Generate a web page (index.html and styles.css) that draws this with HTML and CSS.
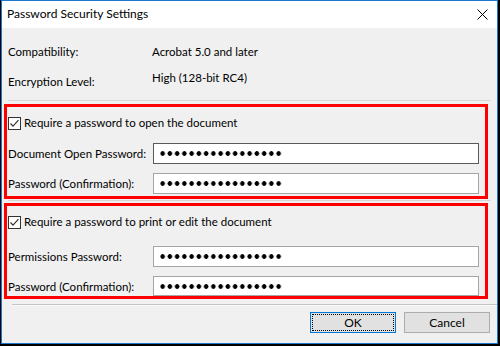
FILE: index.html
```html
<!DOCTYPE html>
<html lang="en">
<head>
    <meta charset="UTF-8">
    <title>Password Security Settings</title>
    <link rel="stylesheet" href="styles.css">
</head>
<body>
<div class="window">
    <div class="titlebar">
        <span class="title">Password Security Settings</span>
        <svg class="close" width="11" height="11" viewBox="0 0 11 11">
            <path d="M0.5 0.5L10.5 10.5M10.5 0.5L0.5 10.5" stroke="#000" stroke-width="1" fill="none"/>
        </svg>
    </div>
    <div class="content">
        <div class="info-row">
            <span class="info-label">Compatibility:</span>
            <span class="info-value">Acrobat 5.0 and later</span>
        </div>
        <div class="info-row level">
            <span class="info-label">Encryption Level:</span>
            <span class="info-value">High (128-bit RC4)</span>
        </div>
        <div class="rule"></div>
        <div class="group">
            <div class="check-row">
                <svg class="checkbox" width="13" height="13" viewBox="0 0 13 13">
                    <rect x="0.5" y="0.5" width="12" height="12" fill="#fff" stroke="#333"/>
                    <path d="M2.5 6.5L5 9.2L10.5 3.2" stroke="#333" stroke-width="1.2" fill="none"/>
                </svg>
                <span>Require a password to open the document</span>
            </div>
            <div class="field-row">
                <span class="field-label">Document Open Password:</span>
                <span class="field focused"><span class="dots"></span></span>
            </div>
            <div class="field-row">
                <span class="field-label">Password (Confirmation):</span>
                <span class="field"><span class="dots"></span></span>
            </div>
        </div>
        <div class="rule between"></div>
        <div class="group second">
            <div class="check-row">
                <svg class="checkbox" width="13" height="13" viewBox="0 0 13 13">
                    <rect x="0.5" y="0.5" width="12" height="12" fill="#fff" stroke="#333"/>
                    <path d="M2.5 6.5L5 9.2L10.5 3.2" stroke="#333" stroke-width="1.2" fill="none"/>
                </svg>
                <span>Require a password to print or edit the document</span>
            </div>
            <div class="field-row">
                <span class="field-label">Permissions Password:</span>
                <span class="field"><span class="dots"></span></span>
            </div>
            <div class="field-row">
                <span class="field-label">Password (Confirmation):</span>
                <span class="field"><span class="dots"></span></span>
            </div>
        </div>
    </div>
    <div class="footer">
        <div class="separator"></div>
        <div class="buttons">
            <button class="button default">OK</button>
            <button class="button">Cancel</button>
        </div>
    </div>
</div>
</body>
</html>
```

FILE: styles.css
```css
body, html {
    margin: 0;
    padding: 0;
    background-color: #000;
    font-family: Lato, 'Noto Sans', sans-serif;
    font-size: 11.5px;
    color: #000;
}
.window {
    margin-left: 1px;
    width: 495px;
    height: 342px;
    border: 1px solid #1c78c8;
    background-color: #f0f0f0;
    display: flex;
    flex-direction: column;
}
.titlebar {
    height: 27px;
    background-color: #fff;
    display: flex;
    align-items: center;
    justify-content: space-between;
    padding: 0 9px 0 5px;
}
.title {
    font-size: 12px;
    margin-top: -2px;
}
.close {
    display: block;
}
.content {
    padding: 14px 0 0 6px;
}
.info-row {
    display: flex;
    align-items: flex-start;
    height: 20px;
    line-height: 20px;
}
.info-row.level {
    margin-top: 10px;
}
.info-row.level .info-value {
    margin-top: -4px;
}
.info-label {
    width: 144px;
    flex-shrink: 0;
}
.rule {
    height: 1px;
    width: 483px;
    background-color: #d6d6d6;
    margin-top: 8px;
}
.rule.between {
    margin: 1px 0 2px;
}
.group {
    width: 484px;
    box-sizing: border-box;
    margin-left: -4px;
    margin-top: 3px;
    border: 3px solid #f00;
    padding: 6px 0 2px 1px;
}
.group.second {
    margin-top: 0;
    padding: 6px 0 0 1px;
}
.check-row {
    display: flex;
    align-items: center;
    height: 20px;
    line-height: 20px;
}
.checkbox {
    display: block;
    margin-right: 3px;
}
.field-row {
    display: flex;
    align-items: center;
    height: 21px;
    line-height: 21px;
    margin-top: 9px;
}
.check-row + .field-row {
    margin-top: 10px;
}
.group.second .check-row + .field-row {
    margin-top: 14px;
}
.group.second .field-row:last-child {
    height: 20px;
}
.field-label {
    width: 145px;
    flex-shrink: 0;
}
.field {
    width: 326px;
    height: 100%;
    box-sizing: border-box;
    border: 1px solid #a5a5a5;
    background-color: #fff;
    display: flex;
    align-items: center;
    padding-left: 5px;
}
.field.focused {
    border-color: #5a5a5a;
}
.dots {
    display: block;
    width: 124px;
    height: 5px;
    background-image: radial-gradient(circle, #000 2px, transparent 2.6px);
    background-size: 7.25px 5px;
}
.footer {
    margin-top: 5px;
}
.separator {
    height: 1px;
    margin-left: 10px;
    background-color: #c4c4c4;
    border-bottom: 1px solid #fafafa;
}
.buttons {
    display: flex;
    justify-content: flex-end;
    gap: 8px;
    padding: 6px 7px 0 0;
}
.button {
    width: 86px;
    height: 21px;
    box-sizing: border-box;
    border: 1px solid #adadad;
    background-color: #e1e1e1;
    font-family: inherit;
    font-size: 12px;
    color: #000;
    padding: 0;
    line-height: 18px;
}
.button.default {
    border-color: #0078d7;
    outline: 1px dotted #000;
    outline-offset: -3px;
}
```
